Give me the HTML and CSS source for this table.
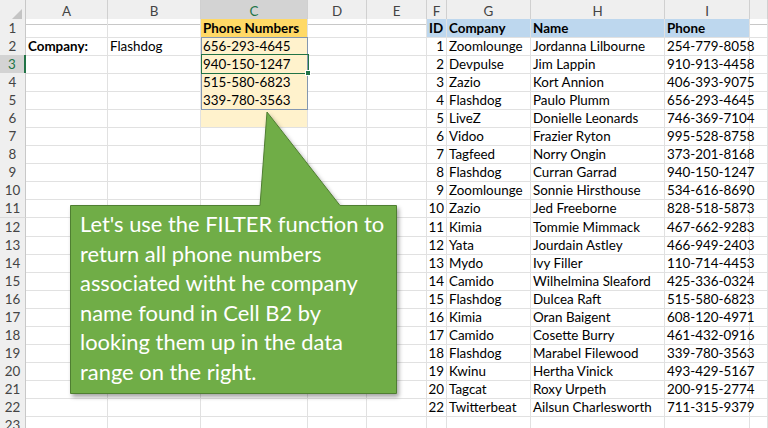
FILE: index.html
```html
<!DOCTYPE html>
<html>
<head>
<meta charset="utf-8">
<link rel="stylesheet" href="styles.css">
</head>
<body>
<div class="sheet">
  <div class="r hdr">
    <div class="h corner"><svg width="14" height="14" viewBox="0 0 14 14"><polygon points="13,1 13,13 1,13" fill="#c4c4c4"/></svg></div>
    <div class="ch">A</div><div class="ch">B</div><div class="ch sel">C</div><div class="ch">D</div><div class="ch">E</div><div class="ch">F</div><div class="ch">G</div><div class="ch">H</div><div class="ch">I</div><div class="ch"></div>
  </div>
  <div class="r">
    <div class="h">1</div><div class="c"></div><div class="c"></div><div class="c gold b">Phone Numbers</div><div class="c"></div><div class="c"></div><div class="c blue b">ID</div><div class="c blue b">Company</div><div class="c blue b">Name</div><div class="c blue b">Phone</div><div class="c"></div>
  </div>
  <div class="r">
    <div class="h">2</div><div class="c b">Company:</div><div class="c">Flashdog</div><div class="c ly">656-293-4645</div><div class="c"></div><div class="c"></div><div class="c n">1</div><div class="c">Zoomlounge</div><div class="c">Jordanna Lilbourne</div><div class="c">254-779-8058</div><div class="c"></div>
  </div>
  <div class="r">
    <div class="h act">3</div><div class="c"></div><div class="c"></div><div class="c ly">940-150-1247</div><div class="c"></div><div class="c"></div><div class="c n">2</div><div class="c">Devpulse</div><div class="c">Jim Lappin</div><div class="c">910-913-4458</div><div class="c"></div>
  </div>
  <div class="r">
    <div class="h">4</div><div class="c"></div><div class="c"></div><div class="c ly">515-580-6823</div><div class="c"></div><div class="c"></div><div class="c n">3</div><div class="c">Zazio</div><div class="c">Kort Annion</div><div class="c">406-393-9075</div><div class="c"></div>
  </div>
  <div class="r">
    <div class="h">5</div><div class="c"></div><div class="c"></div><div class="c ly">339-780-3563</div><div class="c"></div><div class="c"></div><div class="c n">4</div><div class="c">Flashdog</div><div class="c">Paulo Plumm</div><div class="c">656-293-4645</div><div class="c"></div>
  </div>
  <div class="r">
    <div class="h">6</div><div class="c"></div><div class="c"></div><div class="c ly"></div><div class="c"></div><div class="c"></div><div class="c n">5</div><div class="c">LiveZ</div><div class="c">Donielle Leonards</div><div class="c">746-369-7104</div><div class="c"></div>
  </div>
  <div class="r">
    <div class="h">7</div><div class="c"></div><div class="c"></div><div class="c"></div><div class="c"></div><div class="c"></div><div class="c n">6</div><div class="c">Vidoo</div><div class="c">Frazier Ryton</div><div class="c">995-528-8758</div><div class="c"></div>
  </div>
  <div class="r">
    <div class="h">8</div><div class="c"></div><div class="c"></div><div class="c"></div><div class="c"></div><div class="c"></div><div class="c n">7</div><div class="c">Tagfeed</div><div class="c">Norry Ongin</div><div class="c">373-201-8168</div><div class="c"></div>
  </div>
  <div class="r">
    <div class="h">9</div><div class="c"></div><div class="c"></div><div class="c"></div><div class="c"></div><div class="c"></div><div class="c n">8</div><div class="c">Flashdog</div><div class="c">Curran Garrad</div><div class="c">940-150-1247</div><div class="c"></div>
  </div>
  <div class="r">
    <div class="h">10</div><div class="c"></div><div class="c"></div><div class="c"></div><div class="c"></div><div class="c"></div><div class="c n">9</div><div class="c">Zoomlounge</div><div class="c">Sonnie Hirsthouse</div><div class="c">534-616-8690</div><div class="c"></div>
  </div>
  <div class="r">
    <div class="h">11</div><div class="c"></div><div class="c"></div><div class="c"></div><div class="c"></div><div class="c"></div><div class="c n">10</div><div class="c">Zazio</div><div class="c">Jed Freeborne</div><div class="c">828-518-5873</div><div class="c"></div>
  </div>
  <div class="r">
    <div class="h">12</div><div class="c"></div><div class="c"></div><div class="c"></div><div class="c"></div><div class="c"></div><div class="c n">11</div><div class="c">Kimia</div><div class="c">Tommie Mimmack</div><div class="c">467-662-9283</div><div class="c"></div>
  </div>
  <div class="r">
    <div class="h">13</div><div class="c"></div><div class="c"></div><div class="c"></div><div class="c"></div><div class="c"></div><div class="c n">12</div><div class="c">Yata</div><div class="c">Jourdain Astley</div><div class="c">466-949-2403</div><div class="c"></div>
  </div>
  <div class="r">
    <div class="h">14</div><div class="c"></div><div class="c"></div><div class="c"></div><div class="c"></div><div class="c"></div><div class="c n">13</div><div class="c">Mydo</div><div class="c">Ivy Filler</div><div class="c">110-714-4453</div><div class="c"></div>
  </div>
  <div class="r">
    <div class="h">15</div><div class="c"></div><div class="c"></div><div class="c"></div><div class="c"></div><div class="c"></div><div class="c n">14</div><div class="c">Camido</div><div class="c">Wilhelmina Sleaford</div><div class="c">425-336-0324</div><div class="c"></div>
  </div>
  <div class="r">
    <div class="h">16</div><div class="c"></div><div class="c"></div><div class="c"></div><div class="c"></div><div class="c"></div><div class="c n">15</div><div class="c">Flashdog</div><div class="c">Dulcea Raft</div><div class="c">515-580-6823</div><div class="c"></div>
  </div>
  <div class="r">
    <div class="h">17</div><div class="c"></div><div class="c"></div><div class="c"></div><div class="c"></div><div class="c"></div><div class="c n">16</div><div class="c">Kimia</div><div class="c">Oran Baigent</div><div class="c">608-120-4971</div><div class="c"></div>
  </div>
  <div class="r">
    <div class="h">18</div><div class="c"></div><div class="c"></div><div class="c"></div><div class="c"></div><div class="c"></div><div class="c n">17</div><div class="c">Camido</div><div class="c">Cosette Burry</div><div class="c">461-432-0916</div><div class="c"></div>
  </div>
  <div class="r">
    <div class="h">19</div><div class="c"></div><div class="c"></div><div class="c"></div><div class="c"></div><div class="c"></div><div class="c n">18</div><div class="c">Flashdog</div><div class="c">Marabel Filewood</div><div class="c">339-780-3563</div><div class="c"></div>
  </div>
  <div class="r">
    <div class="h">20</div><div class="c"></div><div class="c"></div><div class="c"></div><div class="c"></div><div class="c"></div><div class="c n">19</div><div class="c">Kwinu</div><div class="c">Hertha Vinick</div><div class="c">493-429-5167</div><div class="c"></div>
  </div>
  <div class="r">
    <div class="h">21</div><div class="c"></div><div class="c"></div><div class="c"></div><div class="c"></div><div class="c"></div><div class="c n">20</div><div class="c">Tagcat</div><div class="c">Roxy Urpeth</div><div class="c">200-915-2774</div><div class="c"></div>
  </div>
  <div class="r">
    <div class="h">22</div><div class="c"></div><div class="c"></div><div class="c"></div><div class="c"></div><div class="c"></div><div class="c n">22</div><div class="c">Twitterbeat</div><div class="c">Ailsun Charlesworth</div><div class="c">711-315-9379</div><div class="c"></div>
  </div>
  <div class="r">
    <div class="h">23</div><div class="c"></div><div class="c"></div><div class="c"></div><div class="c"></div><div class="c"></div><div class="c"></div><div class="c"></div><div class="c"></div><div class="c"></div><div class="c"></div>
  </div>

  <div class="spill"></div>
  <div class="active"><span class="handle"></span></div>

  <svg class="shape" width="768" height="428" viewBox="0 0 768 428">
    <defs>
      <filter id="sh" x="-10%" y="-10%" width="130%" height="130%">
        <feDropShadow dx="2" dy="3" stdDeviation="2" flood-color="#000" flood-opacity="0.35"/>
      </filter>
    </defs>
    <path d="M70.5,205.5 H260 L267,112 L340,205.5 H396.5 V393.5 H70.5 Z" fill="#70AD47" stroke="#507E32" stroke-width="1" filter="url(#sh)"/>
  </svg>
  <div class="callout-text">Let's use the FILTER function to<br>return all phone numbers<br>associated witht he company<br>name found in Cell B2 by<br>looking them up in the data<br>range on the right.</div>
</div>
</body>
</html>
```
FILE: styles.css
```css
html, body {
  margin: 0;
  padding: 0;
  background: #ffffff;
}
body {
  width: 768px;
  height: 428px;
  overflow: hidden;
  font-family: "Lato", "Open Sans", sans-serif;
}
.sheet {
  position: relative;
  width: 768px;
  height: 428px;
}
.r {
  display: grid;
  grid-template-columns: 26px 82px 93px 107px 59px 60px 20px 84px 134px 85px 18px;
  height: 18.05px;
}
.r.hdr {
  height: 19px;
  background: #efefef;
}
.h {
  background: #efefef;
  border-right: 1px solid #c8c8c8;
  border-bottom: 1px solid #dadada;
  color: #444;
  font-size: 13.4px;
  line-height: 18px;
  text-align: center;
  box-sizing: border-box;
}
.h.act {
  background: #d3d3d3;
  color: #217346;
  border-right: 2px solid #217346;
}
.corner {
  display: flex;
  align-items: flex-end;
  justify-content: flex-end;
  padding: 0 2px 2px 0;
  border-bottom: 1px solid #c8c8c8;
}
.ch {
  border-right: 1px solid #d0d0d0;
  border-bottom: 1px solid #c8c8c8;
  box-sizing: border-box;
  color: #444;
  font-size: 13.4px;
  line-height: 23px;
  text-align: center;
}
.ch.sel {
  background: #d3d3d3;
  color: #217346;
  border-bottom: 2px solid #217346;
}
.c {
  border-right: 1px solid #e1e1e1;
  border-bottom: 1px solid #e1e1e1;
  box-sizing: border-box;
  font-size: 13.4px;
  line-height: 18px;
  color: #000;
  padding-left: 2px;
  white-space: nowrap;
  overflow: visible;
}
.c.b { font-weight: bold; }
.c.n { text-align: right; padding-right: 2px; padding-left: 0; }
.gold { background: #FFD966; }
.ly { background: #FFF2CC; }
.blue { background: #BDD7EE; }
.spill {
  position: absolute;
  left: 201px;
  top: 37px;
  width: 107px;
  height: 73px;
  border: 1px solid #8497b0;
  box-sizing: border-box;
}
.active {
  position: absolute;
  left: 201px;
  top: 54px;
  width: 108px;
  height: 20px;
  border: 1px solid #217346;
  box-sizing: border-box;
}
.handle {
  position: absolute;
  right: -3px;
  bottom: -3px;
  width: 4px;
  height: 4px;
  background: #217346;
  border: 1px solid #fff;
}
.shape {
  position: absolute;
  left: 0;
  top: 0;
  pointer-events: none;
}
.callout-text {
  position: absolute;
  left: 80px;
  top: 209px;
  color: #ffffff;
  font-size: 21.9px;
  line-height: 29.5px;
  white-space: nowrap;
}
```
